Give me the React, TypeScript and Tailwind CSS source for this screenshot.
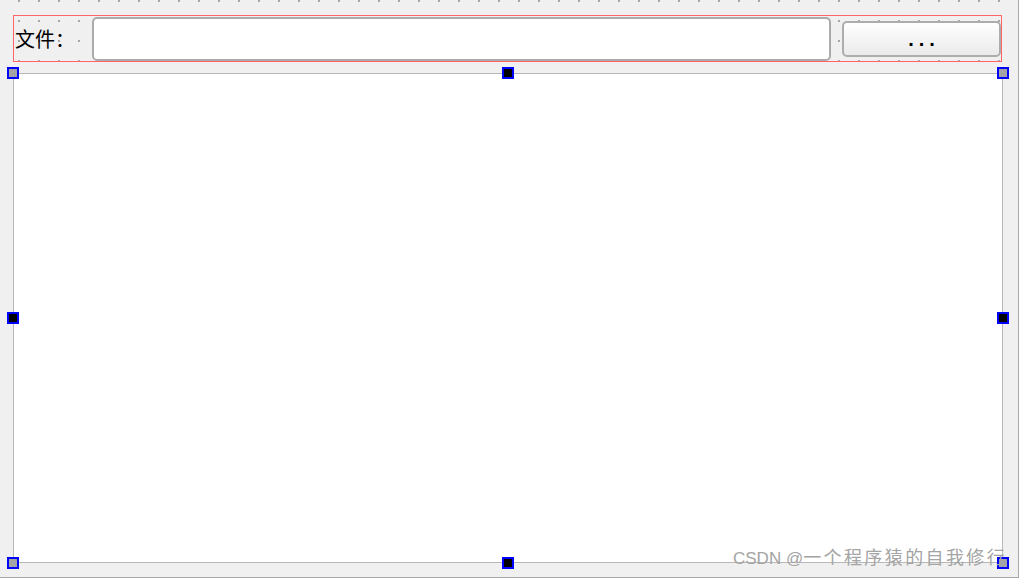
const Handle = ({ className, dark }: { className: string; dark?: boolean }) => (
  <div
    className={
      "absolute w-[12px] h-[12px] border-2 border-[#0000ff] " +
      (dark ? "bg-black " : "bg-[#a4a4a4] ") +
      className
    }
  />
);

export default function App() {
  return (
    <div className="w-[1021px] h-[580px] bg-white">
      <div
        className="relative w-[1019px] h-[578px] border-r border-b border-[#a8a8a8] bg-[#f0f0f0] bg-[radial-gradient(circle,#a6a6a6_0.9px,transparent_1.3px)] bg-[length:20px_20px] bg-[position:9px_-9px] pl-[13px] pt-[15px] flex flex-col"
        style={{ fontFamily: '"Noto Sans CJK SC", "Liberation Sans", sans-serif' }}
      >
        {/* form row */}
        <div className="w-[989px] h-[47px] border border-solid border-red-400 flex items-center">
          <span className="ml-[1px] w-[77px] text-[20px] leading-none text-black">文件：</span>
          <input
            readOnly
            className="w-[739px] h-[44px] mt-[1px] bg-white border-2 border-[#ababab] rounded-[5px] outline-none"
          />
          <button className="ml-[11px] w-[159px] h-[36px] mt-[1px] border-2 border-[#adadad] rounded-[5px] bg-gradient-to-b from-[#fefefe] to-[#ebebeb] flex items-center justify-center">
            <span className="text-[20px] font-bold leading-none tracking-[5px] pl-[5px] text-black" style={{ fontFamily: '"Liberation Sans", sans-serif' }}>...</span>
          </button>
        </div>

        {/* canvas */}
        <div className="relative mt-[11px] w-[990px] h-[490px] border border-[#b8b8b8] bg-white">
          <Handle className="-left-[7px] -top-[7px]" />
          <Handle className="left-1/2 -ml-[6px] -top-[7px]" dark />
          <Handle className="-right-[7px] -top-[7px]" />
          <Handle className="-left-[7px] top-1/2 -mt-[6px]" dark />
          <Handle className="-right-[7px] top-1/2 -mt-[6px]" dark />
          <Handle className="-left-[7px] -bottom-[7px]" />
          <Handle className="left-1/2 -ml-[6px] -bottom-[7px]" dark />
          <Handle className="-right-[7px] -bottom-[7px]" />
        </div>

        {/* watermark */}
        <div className="absolute left-[733px] top-[547px] flex items-baseline text-[#a4a4a4] leading-none pointer-events-none">
          <span className="text-[17px]" style={{ fontFamily: '"Liberation Sans", sans-serif' }}>CSDN @</span>
          <span className="text-[18px] tracking-[2.4px]">一个程序猿的自我修行</span>
        </div>
      </div>
    </div>
  );
}
